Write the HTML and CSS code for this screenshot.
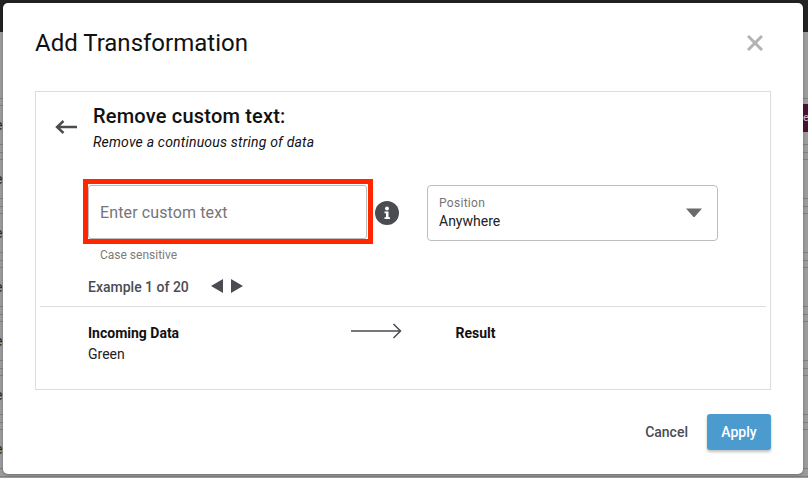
FILE: index.html
```html
<!DOCTYPE html>
<html lang="en">
<head>
<meta charset="utf-8">
<title>Add Transformation</title>
<link rel="stylesheet" href="styles.css">
</head>
<body>
<div class="backdrop">
  <div class="topbar"></div>
  <div class="bg-rows">
    <div class="bg-row"><div class="bg-cell">e</div></div>
    <div class="bg-row"><div class="bg-cell">e</div></div>
    <div class="bg-row"><div class="bg-cell">e</div></div>
    <div class="bg-row"><div class="bg-cell">e</div></div>
    <div class="bg-row"><div class="bg-cell">e</div></div>
    <div class="bg-row"><div class="bg-cell">e</div></div>
    <div class="bg-row"><div class="bg-cell">e</div></div>
  </div>
  <div class="bg-badge">e</div>
</div>
<div class="modal">
  <header class="modal-head">
    <h1 class="modal-title">Add Transformation</h1>
    <svg class="close" viewBox="0 0 16 16" width="16" height="16"><path d="M1 1L15 15M15 1L1 15" stroke="#b3b3b3" stroke-width="3" fill="none"/></svg>
  </header>
  <section class="panel">
    <div class="panel-head">
      <svg class="back" viewBox="0 0 22 14" width="22" height="14"><path d="M22 7H2.500M8.500 1L2 7L8.500 13" stroke="#4a4c52" stroke-width="2.400" fill="none"/></svg>
      <div>
        <h2 class="panel-title">Remove custom text:</h2>
        <p class="panel-sub">Remove a continuous string of data</p>
      </div>
    </div>
    <div class="fields">
      <div class="text-field">
        <div class="highlight"><div class="input">Enter custom text</div></div>
        <div class="hint">Case sensitive</div>
      </div>
      <svg class="info" viewBox="0 0 24 24" width="24" height="24"><circle cx="12" cy="12" r="12" fill="#4a4c52"/><circle cx="12" cy="7.500" r="2" fill="#fff"/><path d="M9.500 10.500H13.500V16.200H15V18H9.500V16.200H11V12.300H9.500Z" fill="#fff"/></svg>
      <div class="select">
        <div class="select-text">
          <div class="select-label">Position</div>
          <div class="select-value">Anywhere</div>
        </div>
        <svg class="caret" viewBox="0 0 16 10" width="16" height="10"><path d="M0 0.500H16L9 8.500Q8 9.500 7 8.500Z" fill="#6b6b6b"/></svg>
      </div>
    </div>
    <div class="pager">
      <span class="pager-text">Example 1 of 20</span>
      <svg class="pager-arrows" viewBox="0 0 33 14" width="33" height="14"><path d="M12 0V14L0 7ZM20 0V14L32 7Z" fill="#4a4c52"/></svg>
    </div>
    <div class="example">
      <div class="col-in">
        <div class="col-head">Incoming Data</div>
        <div class="col-val">Green</div>
      </div>
      <svg class="flow" viewBox="0 0 51 16" width="51" height="16"><path d="M0 8H49.500M42.500 1L49.500 8L42.500 15" stroke="#4a4c52" stroke-width="1.500" fill="none"/></svg>
      <div class="col-out"><div class="col-head">Result</div></div>
    </div>
  </section>
  <footer class="modal-foot">
    <button class="btn-cancel">Cancel</button>
    <button class="btn-apply">Apply</button>
  </footer>
</div>
</body>
</html>
```
FILE: styles.css
```css
* { box-sizing: border-box; }
html, body { margin: 0; height: 100%; overflow: hidden; }
body { position: relative; width: 808px; height: 478px; background: #8f8f8f; font-family: Roboto, "Liberation Sans", sans-serif; color: #000; }
.backdrop { position: absolute; inset: 0; background: #9c9c9c; overflow: hidden; color: #2a2a2a; font-size: 14px; }
.topbar { height: 32px; background: #222; }
.bg-rows { margin-top: 66px; border-top: 1px solid #808080; }
.bg-row { height: 54px; border-bottom: 1px solid #808080; padding-top: 6px; }
.bg-cell { height: 40px; border-top: 1px solid #808080; border-bottom: 1px solid #808080; line-height: 38px; margin-left: -5px; padding-left: 0; }
.bg-badge { position: absolute; right: 0; top: 104px; width: 5px; height: 28px; background: #4b1238; color: #cbb; font-size: 11px; line-height: 28px; overflow: hidden; }
.modal { position: absolute; left: 3px; top: 3px; width: 800px; height: 471px; background: #fff; border-radius: 5px; box-shadow: 0 1px 3px rgba(0,0,0,.3); padding: 0 32px; display: flex; flex-direction: column; }
.modal-head { height: 88px; display: flex; align-items: center; justify-content: space-between; padding: 0 8px 8px 0; flex: none; }
.modal-title { margin: 0; font-size: 24px; font-weight: 400; line-height: 32px; color: #111; }
.panel { border: 1px solid #ddd; height: 299px; flex: none; display: flex; flex-direction: column; padding: 0 4px; }
.panel-head { display: flex; padding: 12px 0 0 15px; height: 82px; }
.back { margin: 16px 16px 0 0; flex: none; }
.panel-title { margin: 0; font-size: 20px; font-weight: 500; line-height: 24px; letter-spacing: .2px; color: #111; }
.panel-sub { margin: 5px 0 0; font-size: 14px; font-style: italic; line-height: 18px; letter-spacing: .2px; color: #111; }
.fields { display: flex; align-items: flex-start; padding: 5px 0 0 43px; height: 90px; }
.text-field { width: 290px; flex: none; }
.highlight { border: 5px solid #ff2600; height: 65px; }
.input { margin: 1px 1px 0 0; height: 54px; border: 1px solid #bdbdbd; border-radius: 3px; padding: 0 11px; line-height: 54px; font-size: 16px; letter-spacing: .12px; color: #757575; }
.hint { margin-top: 3px; padding-left: 17px; font-size: 12px; line-height: 16px; color: #7c7c7c; }
.info { margin: 22px 0 0 2px; flex: none; }
.select { margin: 6px 0 0 28px; width: 291px; height: 56px; border: 1px solid #bdbdbd; border-radius: 4px; display: flex; align-items: center; justify-content: space-between; padding: 0 15px 0 11px; }
.select-text { margin-bottom: 1px; }
.select-label { font-size: 12px; line-height: 16px; color: #757575; letter-spacing: .3px; }
.select-value { font-size: 14px; line-height: 20px; color: #222; }
.caret { flex: none; margin-bottom: 1px; }
.pager { display: flex; align-items: center; padding: 4px 0 0 48px; height: 42px; }
.pager-text { font-size: 14px; font-weight: 500; color: #4a4c52; }
.pager-arrows { margin: 0 0 2px 22px; }
.example { border-top: 1px solid #ddd; display: flex; padding: 16px 0 0 48px; align-items: flex-start; }
.col-in { width: 263px; flex: none; }
.col-head { font-size: 14px; font-weight: 700; line-height: 20px; color: #111; }
.col-val { font-size: 14px; line-height: 20px; margin-top: 1px; color: #222; }
.flow { flex: none; }
.col-out { margin-left: 53.5px; }
.modal-foot { flex: 1; display: flex; justify-content: flex-end; align-items: flex-start; padding-top: 24px; }
.btn-cancel { background: none; border: 0; font: 500 14px Roboto, sans-serif; color: #4a4c52; margin: 0 19px 0 0; padding: 0; height: 36px; }
.btn-apply { width: 64px; height: 36px; border: 0; border-radius: 3px; background: #4c9bcf; color: #fff; font: 500 14px Roboto, sans-serif; box-shadow: 0 2px 3px rgba(0,0,0,.25); }
```
